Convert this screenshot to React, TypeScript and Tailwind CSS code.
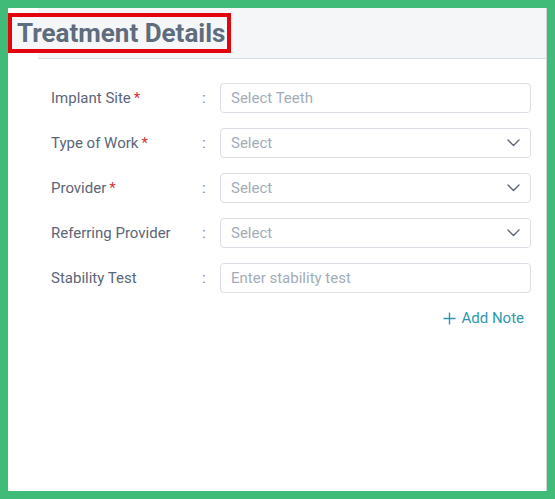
import React from "react";

const font = { fontFamily: "Roboto, 'Liberation Sans', sans-serif" };

function Chevron() {
  return (
    <svg width="13" height="8" viewBox="0 0 13 8" fill="none" className="shrink-0">
      <path d="M1 1l5.5 5.5L12 1" stroke="#5d6778" strokeWidth="1.4" strokeLinecap="round" strokeLinejoin="round" />
    </svg>
  );
}

type Row = { label: string; required?: boolean; placeholder: string; select?: boolean };

const rows: Row[] = [
  { label: "Implant Site", required: true, placeholder: "Select Teeth" },
  { label: "Type of Work", required: true, placeholder: "Select", select: true },
  { label: "Provider", required: true, placeholder: "Select", select: true },
  { label: "Referring Provider", placeholder: "Select", select: true },
  { label: "Stability Test", placeholder: "Enter stability test" },
];

export default function App() {
  return (
    <div className="w-[555px] h-[499px] bg-[#41bb78] p-2" style={font}>
      <div className="relative h-full bg-white border-r border-[#cfd3d9] flex flex-col">
        <div className="ml-[30px] h-[51px] shrink-0 bg-[#f5f6f8] border-b border-[#d9dee5]" />
        <div className="absolute left-0 top-[5px] w-[223px] h-[40px] border-4 border-[#e3050d] bg-[#f5f6f8] flex items-center pl-[5px]">
          <span className="text-[26px] font-bold text-[#5f6c7d] leading-none">Treatment Details</span>
        </div>
        <div className="pl-[43px] pr-[15px] pt-[24px] flex flex-col gap-[15px]">
          {rows.map((r) => (
            <div key={r.label} className="flex items-center h-[30px]">
              <div className="w-[151px] text-[15px] text-[#5b6578] flex items-center">
                <span>{r.label}</span>
                {r.required && <span className="text-[#d1343a] ml-[3px]">*</span>}
              </div>
              <div className="w-[18px] text-[15px] text-[#7a8494]">:</div>
              <div className="flex-1 h-[30px] border border-[#dadfe6] rounded-[4px] flex items-center pl-[10px] pr-[10px] justify-between">
                <span className="text-[15px] text-[#a3adb9]">{r.placeholder}</span>
                {r.select && <Chevron />}
              </div>
            </div>
          ))}
          <div className="flex justify-end pr-[7px] -mt-[1px]">
            <div className="flex items-center gap-[5px] text-[15px] text-[#2b9aad]">
              <svg width="13" height="13" viewBox="0 0 13 13" fill="none">
                <path d="M6.5 0.5v12M0.5 6.5h12" stroke="#2b9aad" strokeWidth="1.4" />
              </svg>
              <span>Add Note</span>
            </div>
          </div>
        </div>
      </div>
    </div>
  );
}
